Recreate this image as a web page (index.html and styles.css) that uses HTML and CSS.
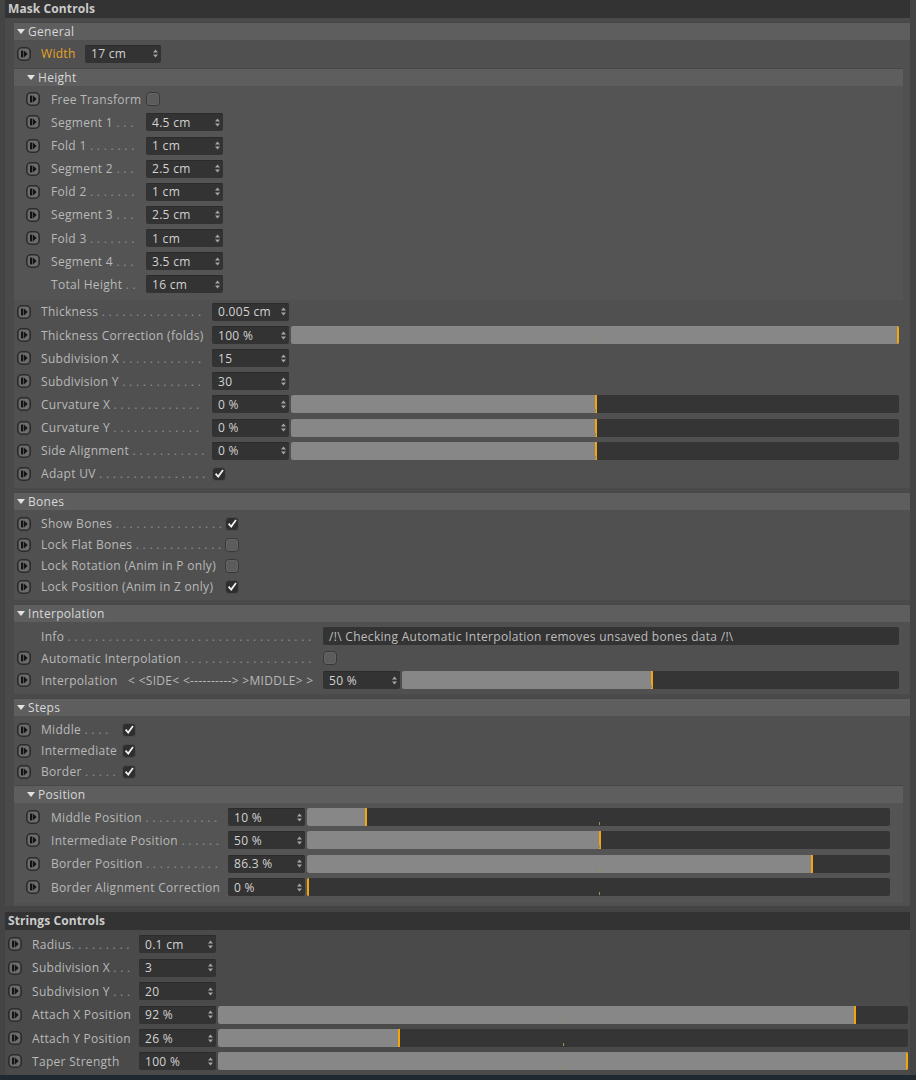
FILE: index.html
```html
<!DOCTYPE html>
<html>
<head>
<meta charset="utf-8">
<title>Mask Controls</title>
<link rel="stylesheet" href="styles.css">
</head>
<body>
<svg class="defs" width="0" height="0" aria-hidden="true">
  <defs>
    <symbol id="key" viewBox="0 0 14 14">
      <rect x="0.8" y="0.8" width="12.4" height="12.4" rx="4.2" fill="#6c6c6c" stroke="#2b2b2b" stroke-width="1.6"/>
      <rect x="4" y="3.6" width="2.2" height="6.8" fill="#141414"/>
      <path d="M6.9 3.6 L10.6 7 L6.9 10.4 Z" fill="#141414"/>
    </symbol>
    <symbol id="spin" viewBox="0 0 5 9">
      <path d="M0 3.6 L2.5 0.6 L5 3.6 Z M0 5.4 L2.5 8.4 L5 5.4 Z"/>
    </symbol>
    <symbol id="tri" viewBox="0 0 8 5">
      <path d="M0 0 H8 L4 5 Z"/>
    </symbol>
    <symbol id="cb-off" viewBox="0 0 14 14">
      <rect x="0.5" y="0.5" width="13" height="13" rx="3.5" fill="#5c5c5c" stroke="#383838"/>
      <rect x="1.5" y="1.5" width="11" height="11" rx="2.6" fill="none" stroke="#666" stroke-width="0.8"/>
    </symbol>
    <symbol id="cb-on" viewBox="0 0 14 14">
      <rect x="0.5" y="0.5" width="13" height="13" rx="3.5" fill="#2e2e2e" stroke="#4a4a4a"/>
      <path d="M2.9 7.3 L4.5 6.1 L6 8.2 L10.3 2.4 L11.7 3.5 L6.3 11 Z" fill="#f2f2f2"/>
    </symbol>
  </defs>
</svg>

<div class="panel mask">
  <div class="panel-head">Mask Controls</div>

  <div class="group g-general">
    <div class="group-bar"><svg class="tri"><use href="#tri"/></svg>General</div>
    <div class="group-body">
      <div class="row r-width">
        <svg class="key"><use href="#key"/></svg>
        <span class="lbl accent">Width</span>
        <span class="num">17 cm<svg class="spin"><use href="#spin"/></svg></span>
      </div>

      <div class="sub g-height">
        <div class="group-bar"><svg class="tri"><use href="#tri"/></svg>Height</div>
        <div class="sub-body">
          <div class="row"><svg class="key"><use href="#key"/></svg><span class="lbl lbl-free">Free Transform</span><svg class="check"><use href="#cb-off"/></svg></div>
          <div class="row"><svg class="key"><use href="#key"/></svg><span class="lbl">Segment 1 <span class="dots">. . .</span></span><span class="num">4.5 cm<svg class="spin"><use href="#spin"/></svg></span></div>
          <div class="row"><svg class="key"><use href="#key"/></svg><span class="lbl">Fold 1 <span class="dots">. . . . . . .</span></span><span class="num">1 cm<svg class="spin"><use href="#spin"/></svg></span></div>
          <div class="row"><svg class="key"><use href="#key"/></svg><span class="lbl">Segment 2 <span class="dots">. . .</span></span><span class="num">2.5 cm<svg class="spin"><use href="#spin"/></svg></span></div>
          <div class="row"><svg class="key"><use href="#key"/></svg><span class="lbl">Fold 2 <span class="dots">. . . . . . .</span></span><span class="num">1 cm<svg class="spin"><use href="#spin"/></svg></span></div>
          <div class="row"><svg class="key"><use href="#key"/></svg><span class="lbl">Segment 3 <span class="dots">. . .</span></span><span class="num">2.5 cm<svg class="spin"><use href="#spin"/></svg></span></div>
          <div class="row"><svg class="key"><use href="#key"/></svg><span class="lbl">Fold 3 <span class="dots">. . . . . . .</span></span><span class="num">1 cm<svg class="spin"><use href="#spin"/></svg></span></div>
          <div class="row"><svg class="key"><use href="#key"/></svg><span class="lbl">Segment 4 <span class="dots">. . .</span></span><span class="num">3.5 cm<svg class="spin"><use href="#spin"/></svg></span></div>
          <div class="row"><span class="nokey"></span><span class="lbl">Total Height<span class="dots"> . .</span></span><span class="num">16 cm<svg class="spin"><use href="#spin"/></svg></span></div>
        </div>
      </div>

      <div class="row"><svg class="key"><use href="#key"/></svg><span class="lbl">Thickness <span class="dots">. . . . . . . . . . . . . . .</span></span><span class="num">0.005 cm<svg class="spin"><use href="#spin"/></svg></span></div>
      <div class="row"><svg class="key"><use href="#key"/></svg><span class="lbl">Thickness Correction (folds)</span><span class="num">100 %<svg class="spin"><use href="#spin"/></svg></span><span class="slider"><span class="fill" style="width:100%"></span></span></div>
      <div class="row"><svg class="key"><use href="#key"/></svg><span class="lbl">Subdivision X<span class="dots"> . . . . . . . . . . . .</span></span><span class="num">15<svg class="spin"><use href="#spin"/></svg></span></div>
      <div class="row"><svg class="key"><use href="#key"/></svg><span class="lbl">Subdivision Y<span class="dots"> . . . . . . . . . . . .</span></span><span class="num">30<svg class="spin"><use href="#spin"/></svg></span></div>
      <div class="row"><svg class="key"><use href="#key"/></svg><span class="lbl">Curvature X<span class="dots"> . . . . . . . . . . . . .</span></span><span class="num">0 %<svg class="spin"><use href="#spin"/></svg></span><span class="slider"><span class="fill" style="width:50.4%"></span></span></div>
      <div class="row"><svg class="key"><use href="#key"/></svg><span class="lbl">Curvature Y<span class="dots"> . . . . . . . . . . . . .</span></span><span class="num">0 %<svg class="spin"><use href="#spin"/></svg></span><span class="slider"><span class="fill" style="width:50.4%"></span></span></div>
      <div class="row"><svg class="key"><use href="#key"/></svg><span class="lbl">Side Alignment <span class="dots">. . . . . . . . . . .</span></span><span class="num">0 %<svg class="spin"><use href="#spin"/></svg></span><span class="slider"><span class="fill" style="width:50.4%"></span></span></div>
      <div class="row"><svg class="key"><use href="#key"/></svg><span class="lbl">Adapt UV <span class="dots">. . . . . . . . . . . . . . . .</span></span><svg class="check"><use href="#cb-on"/></svg></div>
    </div>
  </div>

  <div class="group g-bones">
    <div class="group-bar"><svg class="tri"><use href="#tri"/></svg>Bones</div>
    <div class="group-body">
      <div class="row"><svg class="key"><use href="#key"/></svg><span class="lbl">Show Bones <span class="dots">. . . . . . . . . . . . . . . .</span></span><svg class="check"><use href="#cb-on"/></svg></div>
      <div class="row"><svg class="key"><use href="#key"/></svg><span class="lbl">Lock Flat Bones <span class="dots">. . . . . . . . . . . . .</span></span><svg class="check"><use href="#cb-off"/></svg></div>
      <div class="row"><svg class="key"><use href="#key"/></svg><span class="lbl">Lock Rotation (Anim in P only)</span><svg class="check"><use href="#cb-off"/></svg></div>
      <div class="row"><svg class="key"><use href="#key"/></svg><span class="lbl">Lock Position (Anim in Z only)</span><svg class="check"><use href="#cb-on"/></svg></div>
    </div>
  </div>

  <div class="group g-interp">
    <div class="group-bar"><svg class="tri"><use href="#tri"/></svg>Interpolation</div>
    <div class="group-body">
      <div class="row"><span class="nokey"></span><span class="lbl">Info <span class="dots">. . . . . . . . . . . . . . . . . . . . . . . . . . . . . . . . . . . .</span></span><span class="info">/!\ Checking Automatic Interpolation removes unsaved bones data /!\</span></div>
      <div class="row"><svg class="key"><use href="#key"/></svg><span class="lbl">Automatic Interpolation <span class="dots">. . . . . . . . . . . . . . . . . . .</span></span><svg class="check"><use href="#cb-off"/></svg></div>
      <div class="row"><svg class="key"><use href="#key"/></svg><span class="lbl">Interpolation <span class="range">&lt; &lt;SIDE&lt; &lt;<span class="dash">----------</span>&gt; &gt;MIDDLE&gt; &gt;</span></span><span class="num">50 %<svg class="spin"><use href="#spin"/></svg></span><span class="slider"><span class="fill" style="width:50.6%"></span></span></div>
    </div>
  </div>

  <div class="group g-steps">
    <div class="group-bar"><svg class="tri"><use href="#tri"/></svg>Steps</div>
    <div class="group-body">
      <div class="row"><svg class="key"><use href="#key"/></svg><span class="lbl">Middle <span class="dots">. . . .</span></span><svg class="check"><use href="#cb-on"/></svg></div>
      <div class="row"><svg class="key"><use href="#key"/></svg><span class="lbl">Intermediate</span><svg class="check"><use href="#cb-on"/></svg></div>
      <div class="row"><svg class="key"><use href="#key"/></svg><span class="lbl">Border<span class="dots"> . . . . .</span></span><svg class="check"><use href="#cb-on"/></svg></div>

      <div class="sub g-position">
        <div class="group-bar"><svg class="tri"><use href="#tri"/></svg>Position</div>
        <div class="sub-body">
          <div class="row"><svg class="key"><use href="#key"/></svg><span class="lbl">Middle Position <span class="dots">. . . . . . . . . . .</span></span><span class="num">10 %<svg class="spin"><use href="#spin"/></svg></span><span class="slider"><span class="fill" style="width:10.3%"></span></span></div>
          <div class="row"><svg class="key"><use href="#key"/></svg><span class="lbl">Intermediate Position <span class="dots">. . . . . .</span></span><span class="num">50 %<svg class="spin"><use href="#spin"/></svg></span><span class="slider"><span class="fill" style="width:50.5%"></span></span></div>
          <div class="row"><svg class="key"><use href="#key"/></svg><span class="lbl">Border Position <span class="dots">. . . . . . . . . . .</span></span><span class="num">86.3 %<svg class="spin"><use href="#spin"/></svg></span><span class="slider"><span class="fill" style="width:86.8%"></span></span></div>
          <div class="row"><svg class="key"><use href="#key"/></svg><span class="lbl">Border Alignment Correction</span><span class="num">0 %<svg class="spin"><use href="#spin"/></svg></span><span class="slider"><span class="fill" style="width:0%"></span></span></div>
        </div>
      </div>
    </div>
  </div>
</div>

<div class="panel strings">
  <div class="panel-head">Strings Controls</div>
  <div class="panel-body">
    <div class="row"><svg class="key"><use href="#key"/></svg><span class="lbl">Radius<span class="dots">. . . . . . . . .</span></span><span class="num">0.1 cm<svg class="spin"><use href="#spin"/></svg></span></div>
    <div class="row"><svg class="key"><use href="#key"/></svg><span class="lbl">Subdivision X<span class="dots"> . . .</span></span><span class="num">3<svg class="spin"><use href="#spin"/></svg></span></div>
    <div class="row"><svg class="key"><use href="#key"/></svg><span class="lbl">Subdivision Y<span class="dots"> . . .</span></span><span class="num">20<svg class="spin"><use href="#spin"/></svg></span></div>
    <div class="row"><svg class="key"><use href="#key"/></svg><span class="lbl">Attach X Position</span><span class="num">92 %<svg class="spin"><use href="#spin"/></svg></span><span class="slider"><span class="fill" style="width:92.4%"></span></span></div>
    <div class="row"><svg class="key"><use href="#key"/></svg><span class="lbl">Attach Y Position</span><span class="num">26 %<svg class="spin"><use href="#spin"/></svg></span><span class="slider"><span class="fill" style="width:26.4%"></span></span></div>
    <div class="row"><svg class="key"><use href="#key"/></svg><span class="lbl">Taper Strength</span><span class="num">100 %<svg class="spin"><use href="#spin"/></svg></span><span class="slider"><span class="fill" style="width:100%"></span></span></div>
  </div>
</div>

<div class="edge"></div>
</body>
</html>
```

FILE: styles.css
```css
* { box-sizing: border-box; }

html, body { margin: 0; padding: 0; }

body {
  width: 916px;
  height: 1080px;
  overflow: hidden;
  background: #444444;
  font-family: "Open Sans", "DejaVu Sans", sans-serif;
  font-size: 12px;
  letter-spacing: 0.3px;
  color: #b9b9b9;
  display: flex;
  flex-direction: column;
}

.defs { display: block; width: 0; height: 0; overflow: hidden; }

/* panels */
.panel {
  margin-left: 5px;
  width: 905px;
  background: #4a4a4a;
  flex: none;
}
.panel-head {
  height: 18px;
  line-height: 18px;
  background: #333333;
  color: #cbcbcb;
  font-weight: 700;
  padding-left: 3px;
  letter-spacing: 0.1px;
}
.strings { margin-top: 6px; }
.strings .panel-body { padding: 3px 2px 2px 0; }
.strings .row { height: 23.4px; padding-right: 0; }
.strings .lbl { width: 107px; }

.edge { flex: 1; background: #212930; }

/* groups */
.group { margin-left: 9px; margin-top: 4px; }
.group-bar {
  height: 18px;
  background: #5e5e5e;
  border-top: 1px solid #474747;
  color: #d8d8d8;
  display: flex;
  align-items: center;
  padding-left: 3px;
}
.tri { width: 8px; height: 5px; margin-right: 3px; fill: #e2e2e2; flex: none; }
.group-body { background: #505050; padding: 3px 7px 3px 0; }
.g-general > .group-body { padding-top: 2px; }

.sub { margin-top: 3px; background: #545454; }
.sub .group-bar { padding-left: 13px; }
.sub-body { padding: 1.5px 13px 4.5px 0; }
.g-position .sub-body { padding-top: 2px; padding-bottom: 4px; }

/* rows */
.row {
  display: flex;
  align-items: center;
  height: 23.15px;
  padding-left: 3px;
  padding-right: 4px;
}
.sub .row { padding-left: 12px; padding-right: 0; }
.g-height .row { height: 23.125px; }
.g-position .row { height: 23.33px; }
.g-bones .row, .g-steps > .group-body > .row { height: 21px; }
.g-interp .row { height: 22px; }
.g-general > .group-body > .r-width { height: 23.2px; }

.key { width: 14px; height: 14px; flex: none; margin-right: 10px; }
.nokey { width: 14px; height: 14px; flex: none; margin-right: 10px; }
.sub .key, .sub .nokey { margin-right: 11px; }

.lbl {
  flex: none;
  white-space: nowrap;
  overflow: hidden;
}
.accent { color: #e8a324; }
.dots { color: #8f8f8f; }
.range { margin-left: 7px; }

.g-general > .group-body > .row > .lbl { width: 171px; }
.g-general > .group-body > .r-width > .lbl { width: 44px; }
.g-height .lbl { width: 95px; }
.g-bones .lbl { width: 184px; }
.g-interp .lbl { width: 282px; }
.g-steps > .group-body > .row > .lbl { width: 81px; }
.g-position .lbl { width: 177px; }

/* controls */
.num {
  flex: none;
  width: 77px;
  height: 18px;
  background: #333333;
  border-radius: 2px;
  box-shadow: inset 0 1px 0 #2b2b2b;
  display: flex;
  align-items: center;
  justify-content: space-between;
  padding: 0 3px 0 6px;
  color: #d2d2d2;
  white-space: nowrap;
}
.r-width .num { width: 76px; }
.spin { width: 5px; height: 9px; fill: #a6a6a6; flex: none; }

.check { width: 14px; height: 14px; flex: none; }

.slider {
  flex: 1;
  height: 18px;
  margin-left: 2px;
  background: #353535;
  border-radius: 2px;
  overflow: hidden;
  position: relative;
  display: flex;
}
.slider::after {
  content: "";
  position: absolute;
  left: 50%;
  bottom: 1px;
  width: 1px;
  height: 3px;
  background: #a08c58;
}
.fill {
  display: block;
  height: 100%;
  min-width: 2px;
  background: #878787;
  border-right: 2px solid #f2a50c;
}

.info {
  flex: 1;
  height: 18px;
  background: #333333;
  border-radius: 2px;
  padding-left: 6px;
  display: flex;
  align-items: center;
  color: #bdbdbd;
  white-space: nowrap;
  overflow: hidden;
}
```
